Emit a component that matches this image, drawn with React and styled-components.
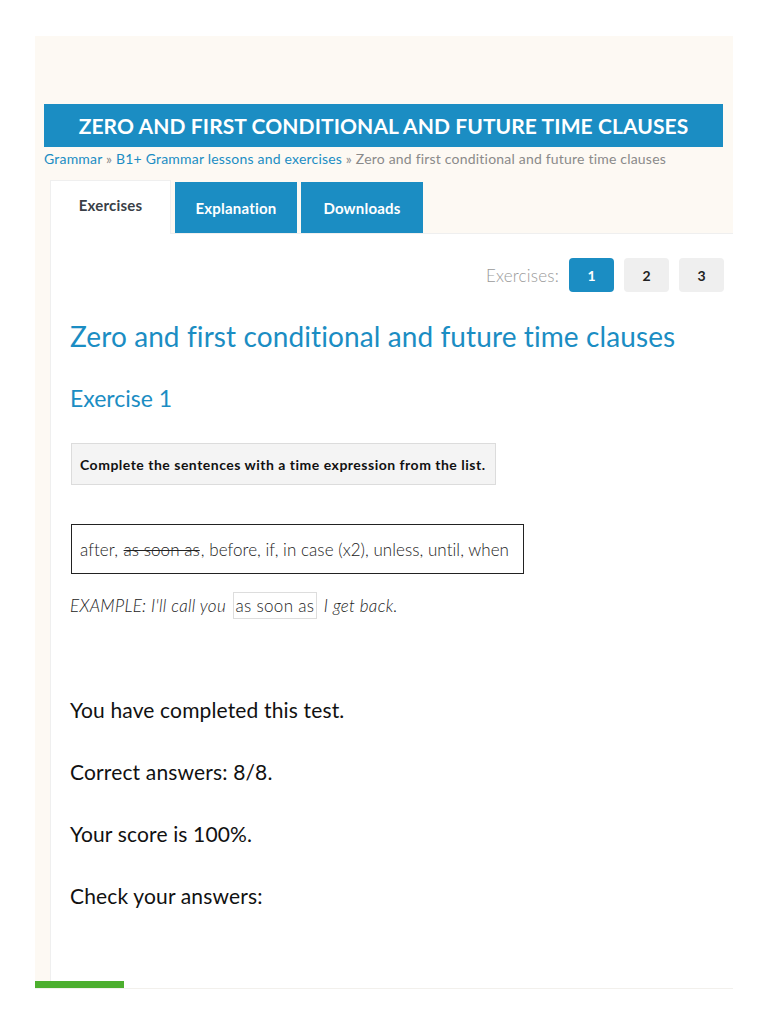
import styled, { createGlobalStyle } from 'styled-components';

const BLUE = '#1b8dc3';

const GlobalStyle = createGlobalStyle`
  html, body {
    margin: 0;
    padding: 0;
    background: #ffffff;
    font-family: Lato, "Open Sans", sans-serif;
    font-variant-ligatures: none;
    font-feature-settings: "liga" 0, "dlig" 0;
  }
`;

function App(){
  return(
    <>
      <GlobalStyle />
      <Page>
        <Card>
          <TitleBar>Zero and first conditional and future time clauses</TitleBar>
          <Breadcrumb>
            <Crumb>Grammar</Crumb> » <Crumb>B1+ Grammar lessons and exercises</Crumb> » Zero and first conditional and future time clauses
          </Breadcrumb>
          <Tabs>
            <Tab $active>Exercises</Tab>
            <Tab>Explanation</Tab>
            <Tab>Downloads</Tab>
          </Tabs>
          <Panel>
            <Pager>
              <PagerLabel>Exercises:</PagerLabel>
              <PageButton $active>1</PageButton>
              <PageButton>2</PageButton>
              <PageButton>3</PageButton>
            </Pager>
            <Heading>Zero and first conditional and future time clauses</Heading>
            <SubHeading>Exercise 1</SubHeading>
            <Instruction>Complete the sentences with a time expression from the list.</Instruction>
            <WordBox>
              after, <s>as soon as</s>, before, if, in case (x2), unless, until, when
            </WordBox>
            <Example>
              EXAMPLE: I'll call you <Answer>as soon as</Answer> I get back.
            </Example>
            <Results>
              <ResultLine>You have completed this test.</ResultLine>
              <ResultLine>Correct answers: 8/8.</ResultLine>
              <ResultLine>Your score is 100%.</ResultLine>
              <ResultLine>Check your answers:</ResultLine>
            </Results>
          </Panel>
          <Progress />
        </Card>
      </Page>
    </>
  );
};

export default App;

const Page = styled.div`
  width: 768px;
  height: 1024px;
  padding-top: 36px;
  box-sizing: border-box;
`;

const Card = styled.div`
  position: relative;
  margin-left: 35px;
  width: 698px;
  height: 952px;
  background: #fdf9f3;
  display: flex;
  flex-direction: column;
  border-bottom: 1px solid #f2f0ec;
`;

const TitleBar = styled.div`
  margin: 68px 10px 0 9px;
  height: 43px;
  background: ${BLUE};
  color: #ffffff;
  display: flex;
  justify-content: center;
  align-items: center;
  text-transform: uppercase;
  font-weight: 700;
  font-size: 21px;
  letter-spacing: 0.1px;
`;

const Breadcrumb = styled.div`
  margin-left: 9px;
  height: 24px;
  line-height: 24px;
  font-size: 14px;
  letter-spacing: 0.2px;
  color: #8a8a8a;
`;

const Crumb = styled.span`
  color: ${BLUE};
`;

const Tabs = styled.div`
  margin-top: 9px;
  padding-left: 15px;
  display: flex;
  align-items: flex-end;
  gap: 4px;
`;

const Tab = styled.div`
  box-sizing: border-box;
  width: ${ ({ $active }) => $active ? '121px' : '122px' };
  height: ${ ({ $active }) => $active ? '54px' : '51px' };
  display: flex;
  justify-content: center;
  align-items: center;
  padding-bottom: ${ ({ $active }) => $active ? '6px' : '0' };
  font-size: 15px;
  font-weight: 700;
  letter-spacing: 0.2px;
  background: ${ ({ $active }) => $active ? '#ffffff' : BLUE };
  color: ${ ({ $active }) => $active ? '#3a3f47' : '#ffffff' };
  border: ${ ({ $active }) => $active ? '1px solid #efefef' : 'none' };
  border-bottom: none;
  margin-bottom: ${ ({ $active }) => $active ? '-1px' : '0' };
  position: relative;
  z-index: 1;
`;

const Panel = styled.div`
  flex: 1;
  margin-left: 15px;
  background: #ffffff;
  border-top: 1px solid #efefef;
  border-left: 1px solid #efefef;
  padding: 24px 9px 0 19px;
  display: flex;
  flex-direction: column;
  align-items: flex-start;
`;

const Pager = styled.div`
  align-self: stretch;
  display: flex;
  justify-content: flex-end;
  align-items: center;
  gap: 10px;
`;

const PagerLabel = styled.span`
  font-size: 17px;
  font-weight: 300;
  letter-spacing: 0.2px;
  color: #9a9a9a;
`;

const PageButton = styled.div`
  width: 45px;
  height: 34px;
  border-radius: 4px;
  display: flex;
  justify-content: center;
  align-items: center;
  font-size: 14px;
  font-weight: 700;
  background: ${ ({ $active }) => $active ? BLUE : '#efefef' };
  color: ${ ({ $active }) => $active ? '#ffffff' : '#222222' };
`;

const Heading = styled.h1`
  margin: 26px 0 0 0;
  font-size: 28px;
  font-weight: 400;
  line-height: 36px;
  letter-spacing: 0.1px;
  color: ${BLUE};
`;

const SubHeading = styled.h2`
  margin: 29px 0 0 0;
  font-size: 23px;
  font-weight: 400;
  line-height: 30px;
  color: ${BLUE};
`;

const Instruction = styled.div`
  margin-top: 30px;
  margin-left: 1px;
  width: 425px;
  height: 42px;
  box-sizing: border-box;
  display: flex;
  align-items: center;
  padding-left: 8px;
  background: #f4f4f4;
  border: 1px solid #dcdcdc;
  font-size: 14px;
  letter-spacing: 0.5px;
  font-weight: 700;
  color: #111111;
`;

const WordBox = styled.div`
  margin-top: 39px;
  margin-left: 1px;
  width: 453px;
  height: 50px;
  box-sizing: border-box;
  display: flex;
  align-items: center;
  padding-left: 8px;
  border: 1px solid #222222;
  font-size: 17px;
  letter-spacing: 0.05px;
  font-weight: 300;
  color: #222222;
  white-space: pre;

  s {
    text-decoration-thickness: 1px;
    margin: 0 1px;
  }
`;

const Example = styled.div`
  margin-top: 18px;
  font-size: 17px;
  letter-spacing: 0.3px;
  font-weight: 300;
  font-style: italic;
  color: #222222;
`;

const Answer = styled.span`
  display: inline-block;
  font-style: normal;
  font-weight: 300;
  border: 1px solid #dddddd;
  padding: 2px 2px;
  margin: 0 2px;
`;

const Results = styled.div`
  margin-top: 79px;
  display: flex;
  flex-direction: column;
  gap: 38px;
`;

const ResultLine = styled.div`
  font-size: 21px;
  line-height: 24px;
  letter-spacing: 0.15px;
  color: #111111;
`;

const Progress = styled.div`
  position: absolute;
  left: 0;
  bottom: 0;
  width: 89px;
  height: 7px;
  background: #4caf2e;
  z-index: 2;
`;
